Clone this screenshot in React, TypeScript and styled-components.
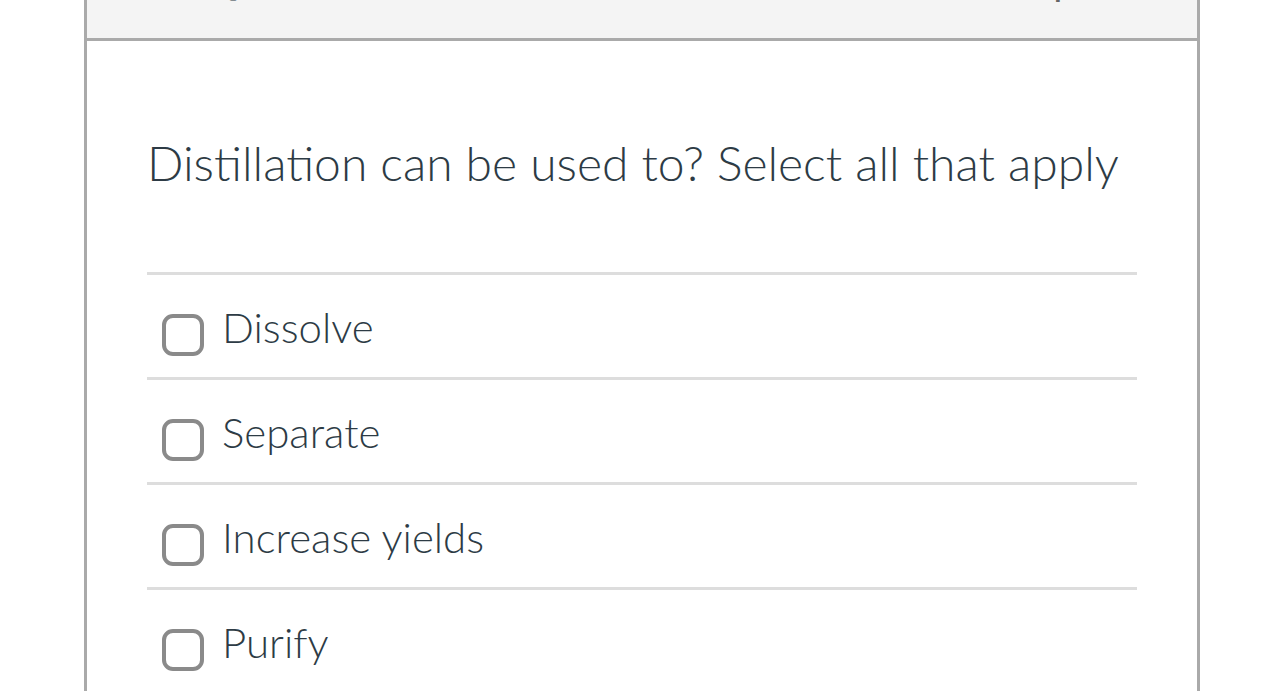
import styled, { createGlobalStyle } from 'styled-components';

const GlobalStyle = createGlobalStyle`
  html, body {
    margin: 0;
    padding: 0;
    background: #fff;
    font-family: Lato, "Open Sans", sans-serif;
    color: #2d3b45;
  }
`;

const Page = styled.div`
  padding-left: 84px;
  width: 1116px;
  overflow: hidden;
  height: 691px;
`;

const Card = styled.div`
  margin-top: -62px;
  border: 3px solid #aaaaaa;
  background: #fff;
`;

const Header = styled.div`
  display: flex;
  justify-content: space-between;
  align-items: flex-end;
  height: 100px;
  padding: 0 90px 38px 117px;
  box-sizing: border-box;
  background: #f4f4f4;
  border-bottom: 3px solid #aaaaaa;
  font-size: 40px;
  line-height: 1;
`;

const Title = styled.span`
  font-weight: 700;
  color: #2d3b45;
`;

const Points = styled.span`
  color: #666;
`;

const Body = styled.div`
  padding: 86px 60px 0;
`;

const Question = styled.p`
  margin: 0 0 73px;
  font-size: 48px;
  font-weight: 300;
  line-height: 72px;
`;

const Answers = styled.div`
  display: flex;
  flex-direction: column;
`;

const Row = styled.label`
  display: flex;
  align-items: flex-start;
  gap: 18px;
  height: 105px;
  padding: 22px 0 0 15px;
  box-sizing: border-box;
  border-top: 3px solid #dddddd;
`;

const Box = styled.span`
  flex: none;
  width: 42px;
  height: 42px;
  margin-top: 17px;
  box-sizing: border-box;
  border: 4px solid #8a8a8a;
  border-radius: 11px;
  background: #fff;
`;

const AnswerText = styled.span`
  font-size: 42px;
  font-weight: 300;
  line-height: 60px;
`;

const answers = ['Dissolve', 'Separate', 'Increase yields', 'Purify'];

export default function App() {
  return (
    <Page>
      <GlobalStyle />
      <Card>
        <Header>
          <Title>Question 2</Title>
          <Points>1 pts</Points>
        </Header>
        <Body>
          <Question>Distillation can be used to? Select all that apply</Question>
          <Answers>
            {answers.map(a => (
              <Row key={a}>
                <Box />
                <AnswerText>{a}</AnswerText>
              </Row>
            ))}
          </Answers>
        </Body>
      </Card>
    </Page>
  );
}
